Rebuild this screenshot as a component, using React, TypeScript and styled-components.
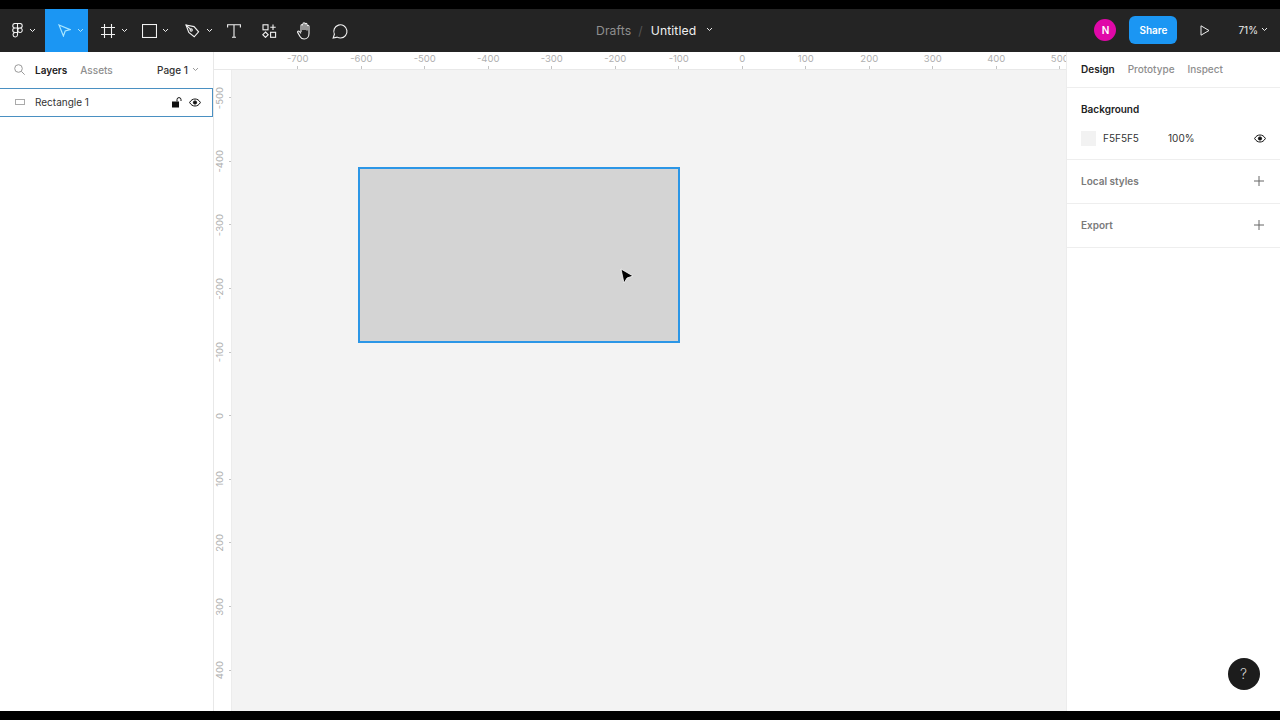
import React from "react";
import styled, { createGlobalStyle } from "styled-components";

const GlobalStyle = createGlobalStyle`
  html, body {
    margin: 0;
    padding: 0;
    background: #000;
  }
  * {
    box-sizing: border-box;
  }
`;

const Frame = styled.div`
  width: 1280px;
  height: 720px;
  padding: 9px 0;
  display: flex;
  flex-direction: column;
  overflow: hidden;
  position: relative;
  font-family: Inter, "Liberation Sans", sans-serif;
  font-size: 10px;
  color: #222;
`;

const Toolbar = styled.header`
  height: 43px;
  flex: none;
  display: flex;
  align-items: center;
  background: #242424;
  color: #eee;
`;

const ToolGroup = styled.div`
  display: flex;
  height: 100%;
`;

const Tool = styled.div<{ $w: number; $active?: boolean; $pad?: number; $gap?: number }>`
  width: ${(p) => p.$w}px;
  height: 100%;
  display: flex;
  align-items: center;
  justify-content: ${(p) => (p.$pad !== undefined ? "flex-start" : "center")};
  padding-left: ${(p) => p.$pad ?? 0}px;
  gap: ${(p) => p.$gap ?? 6}px;
  background: ${(p) => (p.$active ? "#1b96f3" : "transparent")};
  color: ${(p) => (p.$active ? "#a8e6ff" : "#f2f2f2")};
`;

const Crumbs = styled.div`
  margin-left: 239px;
  margin-bottom: 1px;
  display: flex;
  align-items: center;
  font-size: 12.2px;
  letter-spacing: 0.1px;
`;

const Drafts = styled.span`
  color: #8f8f8f;
`;

const Slash = styled.span`
  color: #555;
  margin: 0 8px 0 7px;
`;

const DocName = styled.span`
  color: #f0f0f0;
  margin-right: 10px;
`;

const ToolbarRight = styled.div`
  margin-left: auto;
  margin-bottom: 1px;
  display: flex;
  align-items: center;
  padding-right: 12px;
  color: #eee;
`;

const Avatar = styled.div`
  width: 22px;
  height: 22px;
  border-radius: 50%;
  background: #e008a8;
  color: #fff;
  font-size: 10px;
  font-weight: 600;
  display: flex;
  align-items: center;
  justify-content: center;
  margin-right: 13px;
`;

const ShareButton = styled.div`
  width: 48px;
  height: 28px;
  border-radius: 6px;
  background: #1b96f3;
  color: #fff;
  font-size: 10px;
  font-weight: 600;
  display: flex;
  align-items: center;
  justify-content: center;
  margin-right: 23px;
`;

const Zoom = styled.span`
  font-size: 10px;
  margin-left: 28px;
  margin-right: 3px;
`;

const Body = styled.div`
  flex: 1;
  min-height: 0;
  display: flex;
  background: #fff;
`;

const LeftPanel = styled.aside`
  width: 213px;
  flex: none;
  background: #fff;
`;

const PanelTabs = styled.div`
  height: 36px;
  padding-bottom: 1px;
  display: flex;
  align-items: center;
`;

const LeftTabs = styled(PanelTabs)`
  padding-left: 14px;
`;

const Tab = styled.span<{ $on?: boolean; $left: number }>`
  margin-left: ${(p) => p.$left}px;
  font-weight: ${(p) => (p.$on ? 600 : 500)};
  color: ${(p) => (p.$on ? "#222" : "#8e8e8e")};
`;

const PagePicker = styled.span`
  margin-left: auto;
  margin-right: 14px;
  display: flex;
  align-items: center;
  gap: 4px;
  color: #333;
  font-weight: 500;
`;

const PageChevron = styled.span`
  display: flex;
  color: #999;
`;

const LayerRow = styled.div`
  width: 213px;
  height: 29px;
  padding: 0 11px 1px 15px;
  display: flex;
  align-items: center;
  border: 1px solid #4a90c2;
  border-left: none;
  color: #333;
`;

const LayerName = styled.span`
  margin-left: 10px;
  flex: 1;
`;

const LayerIcons = styled.span`
  display: flex;
  align-items: center;
  gap: 6px;
`;

const Center = styled.main`
  flex: 1;
  min-width: 0;
  display: grid;
  grid-template-columns: 18px 1fr;
  grid-template-rows: 18px 1fr;
  border-left: 1px solid #e8e8e8;
  border-right: 1px solid #ececec;
`;

const TopRuler = styled.div`
  grid-column: 1 / span 2;
  display: flex;
  padding-left: 52px;
  overflow: hidden;
  background: #fff;
  border-bottom: 1px solid #e8e8e8;
`;

const HTick = styled.div`
  flex: none;
  width: 63.5px;
  display: flex;
  flex-direction: column;
  align-items: center;
  justify-content: space-between;
  padding-top: 1px;
  font-size: 9.5px;
  line-height: 12px;
  color: #b0b0b0;

  &::after {
    content: "";
    width: 1px;
    height: 3px;
    background: #c4c4c4;
  }
`;

const SideRuler = styled.div`
  overflow: hidden;
  background: #fff;
  border-right: 1px solid #ececec;
`;

const SideTicks = styled.div`
  margin-top: -4px;
  display: flex;
  flex-direction: column;
`;

const VTick = styled.div`
  height: 63.6px;
  flex: none;
  display: flex;
  align-items: center;
  justify-content: flex-end;
  gap: 3px;
  font-size: 9.5px;
  color: #b0b0b0;

  &::after {
    content: "";
    width: 3px;
    height: 1px;
    background: #c4c4c4;
  }
`;

const VLabel = styled.span`
  writing-mode: vertical-rl;
  transform: rotate(180deg);
  line-height: 12px;
`;

const Canvas = styled.div`
  position: relative;
  background: #f3f3f3;
  overflow: hidden;
`;

const Shape = styled.div`
  position: absolute;
  left: 126px;
  top: 97px;
  width: 322px;
  height: 176px;
  background: #d4d4d4;
  border: 2px solid #2b96e6;
`;

const Pointer = styled.svg`
  position: absolute;
  left: 387px;
  top: 197px;
`;

const RightPanel = styled.aside`
  width: 213px;
  flex: none;
  background: #fff;
`;

const RightTabs = styled(PanelTabs)`
  border-bottom: 1px solid #eee;
`;

const Section = styled.section`
  height: 44px;
  padding: 0 16px 2px 14px;
  display: flex;
  align-items: center;
  justify-content: space-between;
  border-bottom: 1px solid #eee;
`;

const BackgroundSection = styled.section`
  height: 72px;
  padding: 0 14px;
  border-bottom: 1px solid #eee;
`;

const SectionTitle = styled.div`
  font-weight: 600;
  color: #222;
  padding-top: 14px;
  line-height: 14px;
`;

const MutedTitle = styled.span`
  font-weight: 600;
  color: #7a7a7a;
`;

const FillRow = styled.div`
  display: flex;
  align-items: center;
  margin-top: 14px;
  height: 16px;
  color: #333;
`;

const Swatch = styled.div`
  width: 15px;
  height: 15px;
  background: #f2f2f2;
  margin-right: 7px;
`;

const FillHex = styled.span`
  width: 65px;
`;

const FillEye = styled.span`
  margin-left: auto;
  display: flex;
`;

const PlusIcon = styled.svg`
  display: block;
`;

const HelpButton = styled.div`
  position: absolute;
  left: 1227.5px;
  top: 657.5px;
  width: 32px;
  height: 32px;
  border-radius: 50%;
  background: #1c1c1c;
  color: #ccc;
  font-size: 14px;
  font-weight: 300;
  display: flex;
  align-items: center;
  justify-content: center;
`;

const Chevron = ({ size = 7 }: { size?: number }) => (
  <svg width={size} height={size * 0.72} viewBox="0 0 7 5" fill="none" stroke="currentColor" strokeWidth="1">
    <path d="M1 1l2.5 2.5L6 1" />
  </svg>
);

const Eye = () => (
  <svg width="12" height="9" viewBox="0 0 12 9" fill="none" stroke="#111" strokeWidth="1">
    <path d="M.6 4.5C2 2 3.8 1 6 1s4 1 5.4 3.5C10 7 8.2 8 6 8S2 7 .6 4.5z" />
    <circle cx="6" cy="4.5" r="1.6" fill="#111" />
  </svg>
);

const Plus = () => (
  <PlusIcon width="10" height="10" viewBox="0 0 10 10" stroke="#666" strokeWidth="1">
    <path d="M5 0v10M0 5h10" />
  </PlusIcon>
);

const horizontalMarks = [-700, -600, -500, -400, -300, -200, -100, 0, 100, 200, 300, 400, 500];
const verticalMarks = [-500, -400, -300, -200, -100, 0, 100, 200, 300, 400];

export default function App() {
  return (
    <Frame>
      <GlobalStyle />
      <Toolbar>
        <ToolGroup>
          <Tool $w={45} $pad={12}>
            <svg width="11" height="15" viewBox="0 0 11 15" fill="none" stroke="currentColor" strokeWidth="1.1">
              <path d="M5.5.5H3a2.25 2.25 0 000 4.5h2.5V.5zM5.5.5H8A2.25 2.25 0 018 5H5.5V.5zM5.5 5H3a2.25 2.25 0 000 4.5h2.5V5zM10.25 7.25a2.25 2.25 0 11-4.5 0 2.25 2.25 0 014.5 0zM5.5 9.5H3A2.25 2.25 0 105.5 12V9.5z" />
            </svg>
            <Chevron />
          </Tool>
          <Tool $w={43} $active $pad={13}>
            <svg width="13" height="13" viewBox="0 0 13 13" fill="none" stroke="currentColor" strokeWidth="1.2">
              <path d="M1 1l11 4.6-4.8 1.4L5.4 12z" />
            </svg>
            <Chevron />
          </Tool>
          <Tool $w={43} $pad={13}>
            <svg width="14" height="14" viewBox="0 0 14 14" fill="none" stroke="currentColor" strokeWidth="1.1">
              <path d="M3.5 0v14M10.5 0v14M0 3.5h14M0 10.5h14" />
            </svg>
            <Chevron />
          </Tool>
          <Tool $w={43} $pad={11} $gap={5}>
            <svg width="15" height="14" viewBox="0 0 15 14" fill="none" stroke="currentColor" strokeWidth="1.1">
              <rect x=".5" y=".5" width="14" height="13" />
            </svg>
            <Chevron />
          </Tool>
          <Tool $w={43} $pad={11}>
            <svg width="15" height="14" viewBox="0 0 15 14" fill="none" stroke="currentColor" strokeWidth="1.1">
              <path d="M1 1l8 1.6 4.6 5.2-4.4 5-5.4-4.4z" />
              <path d="M1 1l4.4 4.2" />
              <circle cx="6.2" cy="6" r="1.1" />
            </svg>
            <Chevron />
          </Tool>
          <Tool $w={34}>
            <svg width="14" height="14" viewBox="0 0 14 14" fill="none" stroke="currentColor" strokeWidth="1.1">
              <path d="M.6 3.5V.7h12.8v2.8M7 .7v12.6M5 13.3h4" />
            </svg>
          </Tool>
          <Tool $w={36}>
            <svg width="15" height="14" viewBox="0 0 15 14" fill="none" stroke="currentColor" strokeWidth="1.1">
              <rect x="1" y=".8" width="5" height="5" />
              <path d="M11 .5v5.4M8.3 3.2h5.4" />
              <path d="M3.5 8l2.7 2.7-2.7 2.7-2.7-2.7z" />
              <rect x="8.6" y="8.3" width="5" height="5" />
            </svg>
          </Tool>
          <Tool $w={35}>
            <svg width="16" height="18" viewBox="0 0 16 18" fill="none" stroke="currentColor" strokeWidth="1.1">
              <path d="M4 10V3.6a1 1 0 012 0V8M6 8V1.8a1 1 0 012 0V8M8 8V2.4a1 1 0 012 0V8.4M10 8.4V4.2a1 1 0 012 0v7.3c0 3.2-2 5.5-4.8 5.5-2.2 0-3.3-1-4.2-2.6L.8 10.6c-.7-1.2.8-2 1.6-1.1L4 11.4" />
            </svg>
          </Tool>
          <Tool $w={35}>
            <svg width="16" height="16" viewBox="0 0 16 16" fill="none" stroke="currentColor" strokeWidth="1.1">
              <path d="M1.2 15l1.2-3.8A6.6 6.6 0 118.6 15a6.6 6.6 0 01-3.4-.9z" />
            </svg>
          </Tool>
        </ToolGroup>
        <Crumbs>
          <Drafts>Drafts</Drafts>
          <Slash>/</Slash>
          <DocName>Untitled</DocName>
          <Chevron />
        </Crumbs>
        <ToolbarRight>
          <Avatar>N</Avatar>
          <ShareButton>Share</ShareButton>
          <svg width="10" height="11" viewBox="0 0 10 11" fill="none" stroke="currentColor" strokeWidth="1">
            <path d="M1 .8v9.4l8-4.7z" />
          </svg>
          <Zoom>71%</Zoom>
          <Chevron />
        </ToolbarRight>
      </Toolbar>
      <Body>
        <LeftPanel>
          <LeftTabs>
            <svg width="11" height="11" viewBox="0 0 11 11" fill="none" stroke="#999" strokeWidth="1">
              <circle cx="4.5" cy="4.5" r="3.8" />
              <path d="M7.3 7.3l3.4 3.4" />
            </svg>
            <Tab $on $left={10}>Layers</Tab>
            <Tab $left={13}>Assets</Tab>
            <PagePicker>
              Page 1
              <PageChevron>
                <Chevron />
              </PageChevron>
            </PagePicker>
          </LeftTabs>
          <LayerRow>
            <svg width="10" height="6" viewBox="0 0 10 6" fill="none" stroke="#aaa" strokeWidth="1">
              <rect x=".5" y=".5" width="9" height="5" />
            </svg>
            <LayerName>Rectangle 1</LayerName>
            <LayerIcons>
              <svg width="11" height="11" viewBox="0 0 11 11">
                <rect x="0" y="4.5" width="7" height="6" fill="#111" />
                <path d="M5 4.5V2.6a2 2 0 014 0V4" fill="none" stroke="#111" strokeWidth="1" />
              </svg>
              <Eye />
            </LayerIcons>
          </LayerRow>
        </LeftPanel>
        <Center>
          <TopRuler>
            {horizontalMarks.map((m) => (
              <HTick key={m}>{m}</HTick>
            ))}
          </TopRuler>
          <SideRuler>
            <SideTicks>
              {verticalMarks.map((m) => (
                <VTick key={m}>
                  <VLabel>{m}</VLabel>
                </VTick>
              ))}
            </SideTicks>
          </SideRuler>
          <Canvas>
            <Shape />
            <Pointer width="16" height="18" viewBox="0 0 16 18">
              <path d="M2 2l12 7-6 2-3 5z" fill="#000" stroke="rgba(255,255,255,0.75)" strokeWidth="1" />
            </Pointer>
          </Canvas>
        </Center>
        <RightPanel>
          <RightTabs>
            <Tab $on $left={14}>Design</Tab>
            <Tab $left={13}>Prototype</Tab>
            <Tab $left={13}>Inspect</Tab>
          </RightTabs>
          <BackgroundSection>
            <SectionTitle>Background</SectionTitle>
            <FillRow>
              <Swatch />
              <FillHex>F5F5F5</FillHex>
              <span>100%</span>
              <FillEye>
                <Eye />
              </FillEye>
            </FillRow>
          </BackgroundSection>
          <Section>
            <MutedTitle>Local styles</MutedTitle>
            <Plus />
          </Section>
          <Section>
            <MutedTitle>Export</MutedTitle>
            <Plus />
          </Section>
        </RightPanel>
      </Body>
      <HelpButton>?</HelpButton>
    </Frame>
  );
}
